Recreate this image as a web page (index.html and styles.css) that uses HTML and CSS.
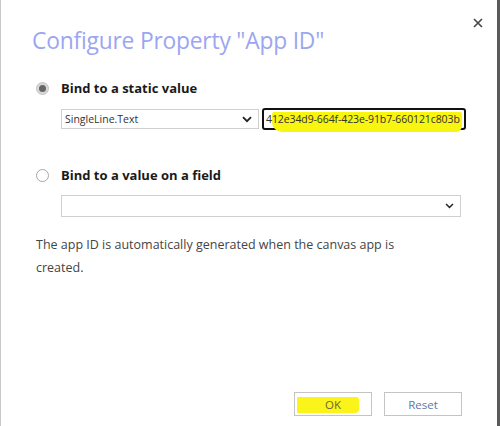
FILE: index.html
```html
<!DOCTYPE html>
<html>
<head>
<meta charset="utf-8">
<link rel="stylesheet" href="styles.css">
</head>
<body>
<div class="dialog">
  <div class="header">
    <h1 class="title">Configure Property "App ID"</h1>
    <button class="close" aria-label="Close">
      <svg width="10" height="10" viewBox="0 0 10 10"><path d="M1 1L9 9M9 1L1 9" stroke="#444" stroke-width="1.6" fill="none"/></svg>
    </button>
  </div>

  <div class="option">
    <span class="radio checked"></span>
    <span class="label">Bind to a static value</span>
  </div>
  <div class="controls">
    <div class="select small">
      <span class="sel-text">SingleLine.Text</span>
      <svg class="chev" width="10" height="7" viewBox="0 0 10 7"><path d="M1 1.2L5 5.2L9 1.2" stroke="#222" stroke-width="1.8" fill="none"/></svg>
    </div>
    <div class="input">
      <span class="hl"></span>
      <span class="val">412e34d9-664f-423e-91b7-660121c803b</span>
    </div>
  </div>

  <div class="option second">
    <span class="radio"></span>
    <span class="label">Bind to a value on a field</span>
  </div>
  <div class="controls">
    <div class="select wide">
      <span class="sel-text"></span>
      <svg class="chev" width="9" height="6" viewBox="0 0 10 7"><path d="M1 1.2L5 5.2L9 1.2" stroke="#222" stroke-width="1.8" fill="none"/></svg>
    </div>
  </div>

  <p class="desc">The app ID is automatically generated when the canvas app is created.</p>

  <div class="footer">
    <button class="btn ok"><span class="mark"></span><span class="btn-text">OK</span></button>
    <button class="btn reset"><span class="btn-text">Reset</span></button>
  </div>
</div>
</body>
</html>
```
FILE: styles.css
```css
* { box-sizing: border-box; }
html, body { margin: 0; padding: 0; background: #fff; }
body { font-family: "Open Sans", "Noto Sans", sans-serif; color: #333; }

.dialog {
  width: 500px;
  height: 426px;
  border-left: 1px solid #c8c8c8;
  border-right: 3px solid #5a5a5a;
  display: flex;
  flex-direction: column;
  padding: 0 0 10px 0;
}

.header {
  display: flex;
  justify-content: space-between;
  align-items: flex-start;
}
.title {
  margin: 25px 0 0 31px;
  font-weight: 400;
  font-size: 22.8px;
  line-height: 32px;
  color: #9ca6f0;
  letter-spacing: -0.2px;
}
.close {
  margin: 17px 13px 0 0;
  width: 12px;
  height: 12px;
  padding: 0;
  border: 0;
  background: transparent;
  display: flex;
  align-items: center;
  justify-content: center;
}

.option {
  display: flex;
  align-items: center;
  margin: 22px 0 0 35px;
  height: 18px;
}
.option.second { margin-top: 36px; }
.radio {
  width: 13px;
  height: 13px;
  border-radius: 50%;
  border: 1px solid #a8a8a8;
  background: #fff;
  margin-right: 12px;
  position: relative;
}
.radio.checked {
  background: #d8d8d8;
  border-color: #c4c4c4;
}
.radio.checked::after {
  content: "";
  position: absolute;
  left: 2px; top: 2px;
  width: 7px; height: 7px;
  border-radius: 50%;
  background: #666;
}
.label {
  font-weight: 700;
  font-size: 13px;
  color: #1a1a1a;
}

.controls {
  display: flex;
  align-items: center;
  margin: 11px 0 0 60px;
}
.select {
  height: 20px;
  border: 1px solid #d0d0d0;
  display: flex;
  align-items: center;
  justify-content: space-between;
  padding: 0 6px 0 3px;
  background: #fff;
}
.select.small { width: 198px; }
.select.wide { width: 400px; height: 22px; }
.sel-text { font-size: 10.5px; color: #333; }
.input {
  margin-left: 3px;
  width: 204px;
  height: 22px;
  border: 2px solid #111;
  border-radius: 3px;
  position: relative;
  display: flex;
  align-items: center;
  padding-left: 2px;
  overflow: visible;
}
.hl {
  position: absolute;
  left: 8px;
  right: 2px;
  top: 2px;
  bottom: -4px;
  background: #f8f511;
  border-radius: 2px 2px 6px 10px;
}
.val {
  position: relative;
  font-size: 10.5px;
  color: #333;
  letter-spacing: -0.1px;
  white-space: nowrap;
}

.desc {
  margin: 16px 0 0 35px;
  width: 385px;
  font-size: 12.5px;
  line-height: 23px;
  color: #444;
}

.footer {
  margin-top: auto;
  display: flex;
  justify-content: flex-end;
  gap: 12px;
  padding-right: 35px;
}
.btn {
  width: 78px;
  height: 24px;
  border: 1px solid #c4c4c4;
  background: #fff;
  position: relative;
  padding: 0;
  font-family: "Open Sans", sans-serif;
  font-size: 11.5px;
}
.btn .mark {
  position: absolute;
  left: 2px; top: 4px;
  width: 62px; height: 16px;
  background: #fbf41a;
  border-radius: 1px 3px 4px 1px;
}
.btn-text { position: relative; }
.ok .btn-text { color: #6a6a3a; }
.reset .btn-text { color: #5a78a8; }
```
